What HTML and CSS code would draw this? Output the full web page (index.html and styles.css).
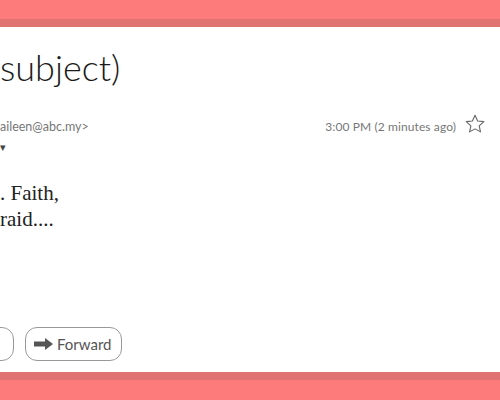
FILE: index.html
```html
<!DOCTYPE html>
<html lang="en">
<head>
    <meta charset="UTF-8">
    <meta name="viewport" content="width=device-width, initial-scale=1.0">
    <link rel="stylesheet" href="styles.css">
    <title>Message</title>
</head>
<body>
    <div class="topbar"></div>
    <div class="mail">
        <h1 class="subject">subject)</h1>
        <div class="meta">
            <span class="from">aileen@abc.my&gt;</span>
            <div class="when">
                <span>3:00 PM (2 minutes ago)</span>
                <svg class="star" width="22" height="22" viewBox="0 0 24 24">
                    <path d="M12 2.5l2.9 6.2 6.7.7-5 4.6 1.4 6.6L12 17.3l-5.9 3.3 1.4-6.6-5-4.6 6.7-.7z" fill="none" stroke="#666" stroke-width="1.2" stroke-linejoin="round"/>
                </svg>
            </div>
        </div>
        <div class="details">&#9662;</div>
        <div class="content">
            <p>. Faith,</p>
            <p>raid....</p>
        </div>
        <div class="actions">
            <button class="btn cut">Reply</button>
            <button class="btn">
                <svg width="21" height="14" viewBox="0 0 21 14">
                    <path d="M1 4.5h11V1l8 6-8 6V9.5H1z" fill="#555"/>
                </svg>
                Forward
            </button>
        </div>
    </div>
</body>
</html>
```

FILE: styles.css
```css
*{
    padding: 0;
    margin: 0;
    box-sizing: border-box;
}
body{
    background: #fd7b7b;
    font-family: Lato, sans-serif;
    overflow: hidden;
}
.topbar{
    height: 19px;
}
.mail{
    background: #fff;
    border-top: 8px solid #e07272;
    border-bottom: 8px solid #e07272;
    height: 361px;
    display: flex;
    flex-direction: column;
    padding-top: 17px;
}
.subject{
    font-weight: 300;
    font-size: 36px;
    line-height: 46px;
    color: #1a1a1a;
}
.meta{
    display: flex;
    justify-content: space-between;
    align-items: center;
    margin-top: 23px;
    padding-right: 14px;
}
.from{
    font-size: 12.5px;
    color: #777;
}
.when{
    display: flex;
    align-items: center;
    gap: 8px;
    font-size: 12px;
    letter-spacing: 0.1px;
    color: #777;
}
.star{
    margin-bottom: 4px;
}
.details{
    font-size: 11px;
    color: #444;
    line-height: 14px;
    margin-top: 1px;
}
.content{
    font-family: "Liberation Serif", serif;
    font-size: 21px;
    line-height: 26px;
    color: #222;
    margin-top: 26px;
}
.actions{
    margin-top: auto;
    margin-bottom: 11px;
    display: flex;
    gap: 11px;
}
.btn{
    display: flex;
    align-items: center;
    gap: 3px;
    height: 34px;
    padding: 0 9px 0 7px;
    background: #fff;
    border: 1px solid #999;
    border-radius: 12px;
    font-family: Lato, sans-serif;
    font-size: 15px;
    color: #555;
}
.cut{
    margin-left: -47px;
    width: 61px;
}
```
